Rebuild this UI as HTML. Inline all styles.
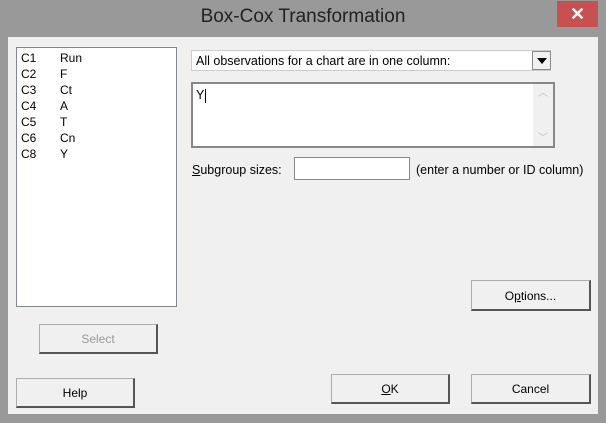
<!DOCTYPE html>
<html><head><style>
body{margin:0;width:606px;height:423px;background:#999;position:relative;overflow:hidden;font-family:"Liberation Sans",sans-serif;font-size:12px;color:#000}
.abs{position:absolute}
.title{left:0;top:6px;width:606px;text-align:center;font-size:19px;color:#222}
.close{left:557px;top:1px;width:41px;height:26px;background:#c75050;color:#fff;text-align:center;font-size:18px;line-height:26px;font-weight:bold}
.client{left:8px;top:37px;width:590px;height:377px;background:#f0f0f0}
.list{left:16px;top:47px;width:159px;height:258px;background:#fff;border:1px solid #828790;padding-top:2px;box-sizing:content-box}
.list div{height:16px;line-height:16px;padding-left:4px}
.list span{display:inline-block;width:39px}
.btn{background:#f0f0f0;border:1px solid #adadad;border-right:2px solid #555;border-bottom:2px solid #555;text-align:center;box-sizing:border-box}
</style></head><body>
<div class="abs title">Box-Cox Transformation</div>
<div class="abs close">✕</div>
<div class="abs client"></div>
<div class="abs list" style="height:256px">
<div><span>C1</span>Run</div><div><span>C2</span>F</div><div><span>C3</span>Ct</div><div><span>C4</span>A</div><div><span>C5</span>T</div><div><span>C6</span>Cn</div><div><span>C8</span>Y</div>
</div>
<div class="abs" style="left:191px;top:50px;width:360px;height:21px;background:#fff;border:1px solid #ccc;line-height:21px;padding-left:4px;box-sizing:border-box;font-size:12.5px">All observations for a chart are in one column:</div>
<div class="abs" style="left:532px;top:51px;width:19px;height:19px;background:#f0f0f0;border:1px solid #888;box-sizing:border-box"><div style="margin:6px auto 0;width:0;height:0;border-left:5px solid transparent;border-right:5px solid transparent;border-top:6px solid #000"></div></div>
<div class="abs" style="left:191px;top:82px;width:364px;height:66px;background:#fff;border:2px solid #888;box-sizing:border-box"></div>
<div class="abs" style="left:533px;top:84px;width:20px;height:62px;background:#f0f0f0;color:#bbb;font-size:10px;text-align:center">︿<div style="margin-top:30px">﹀</div></div>
<div class="abs" style="left:196px;top:88px;font-size:12.5px">Y<span style="border-left:1px solid #000;margin-left:1px;height:14px;display:inline-block;vertical-align:middle"></span></div>
<div class="abs" style="left:192px;top:163px;font-size:12.5px"><u>S</u>ubgroup sizes:</div>
<div class="abs" style="left:294px;top:157px;width:116px;height:23px;background:#fff;border:1px solid #888;box-sizing:border-box"></div>
<div class="abs" style="left:416px;top:163px;font-size:12.5px">(enter a number or ID column)</div>
<div class="abs btn" style="left:471px;top:280px;width:120px;height:31px;line-height:30px">O<u>p</u>tions...</div>
<div class="abs btn" style="left:39px;top:324px;width:119px;height:30px;line-height:29px;color:#999">Select</div>
<div class="abs btn" style="left:16px;top:378px;width:119px;height:30px;line-height:29px">Help</div>
<div class="abs btn" style="left:331px;top:374px;width:119px;height:30px;line-height:29px"><u>O</u>K</div>
<div class="abs btn" style="left:471px;top:374px;width:120px;height:30px;line-height:29px">Cancel</div>
</body></html>
